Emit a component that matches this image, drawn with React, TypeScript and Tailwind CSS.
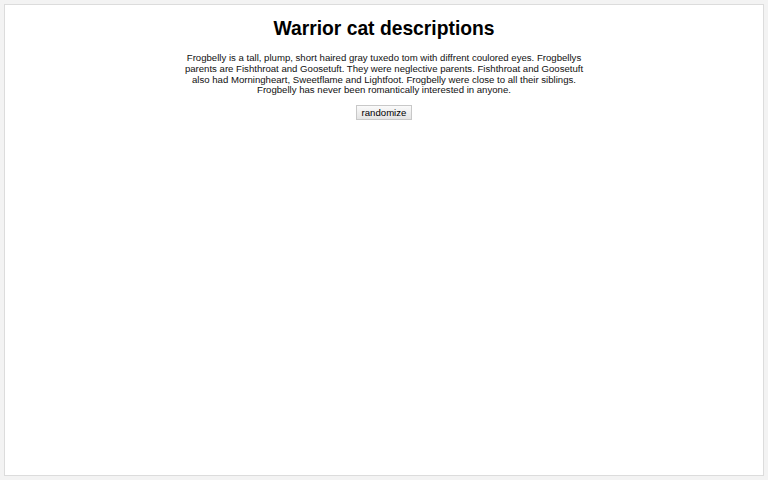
const App = () => {
	return (
		<div className="h-[480px] w-[768px] bg-[#f3f3f3] p-[4px] font-['Liberation_Sans',Arial,sans-serif]">
			<div className="flex h-full flex-col items-center border border-[#dcdcdc] bg-white text-black">
				<h1 className="mt-[12px] text-[19.3px] font-bold leading-[24px]">Warrior cat descriptions</h1>
				<p className="mt-[12px] w-[400px] text-center text-[9.6px] leading-[10.8px] text-[#111]">
					Frogbelly is a tall, plump, short haired gray tuxedo tom with diffrent coulored eyes. Frogbellys
					parents are Fishthroat and Goosetuft. They were neglective parents. Fishthroat and Goosetuft also
					had Morningheart, Sweetflame and Lightfoot. Frogbelly were close to all their siblings. Frogbelly
					has never been romantically interested in anyone.
				</p>
				<button className="mt-[9px] h-[15px] border border-[#c8c8c8] bg-gradient-to-b from-[#fafafa] to-[#e4e4e4] px-[5px] text-[9.6px] leading-[13px] text-black">
					randomize
				</button>
			</div>
		</div>
	);
};

export default App;
